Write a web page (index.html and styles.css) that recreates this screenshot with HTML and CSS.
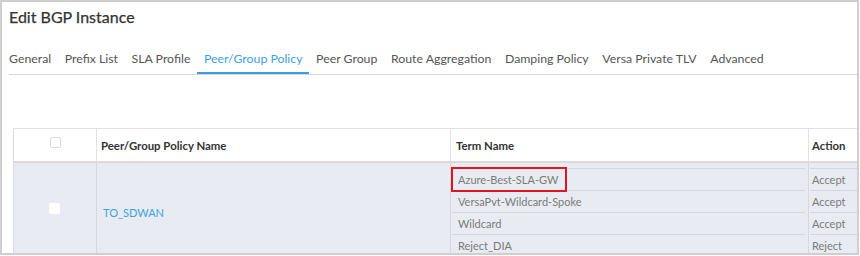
FILE: index.html
```html
<!DOCTYPE html>
<html>
<head>
<meta charset="utf-8">
<link rel="stylesheet" href="styles.css">
</head>
<body>
<div class="frame">
  <h1 class="title">Edit BGP Instance</h1>
  <nav class="tabs">
    <span class="tab">General</span>
    <span class="tab">Prefix List</span>
    <span class="tab">SLA Profile</span>
    <span class="tab active">Peer/Group Policy</span>
    <span class="tab">Peer Group</span>
    <span class="tab">Route Aggregation</span>
    <span class="tab">Damping Policy</span>
    <span class="tab">Versa Private TLV</span>
    <span class="tab">Advanced</span>
  </nav>
  <table class="grid">
    <colgroup>
      <col class="c-check">
      <col class="c-name">
      <col class="c-term">
      <col class="c-action">
    </colgroup>
    <thead>
      <tr>
        <th class="th-check"><span class="cb cb-head"></span></th>
        <th class="th-name">Peer/Group Policy Name</th>
        <th class="th-term">Term Name</th>
        <th class="th-action">Action</th>
      </tr>
    </thead>
    <tbody>
      <tr class="body-row">
        <td class="td-check"><span class="cb cb-body"></span></td>
        <td class="td-name"><a class="link">TO_SDWAN</a></td>
        <td class="td-list">
          <div class="sub term"><span class="hl">Azure-Best-SLA-GW</span></div>
          <div class="sub term">VersaPvt-Wildcard-Spoke</div>
          <div class="sub term">Wildcard</div>
          <div class="sub term">Reject_DIA</div>
        </td>
        <td class="td-list td-action">
          <div class="sub act">Accept</div>
          <div class="sub act">Accept</div>
          <div class="sub act">Accept</div>
          <div class="sub act">Reject</div>
        </td>
      </tr>
    </tbody>
  </table>
</div>
</body>
</html>
```

FILE: styles.css
```css
html, body {
  margin: 0;
  padding: 0;
  background: #ffffff;
}
body {
  font-family: Lato, "Open Sans", "Liberation Sans", sans-serif;
  color: #333;
}
.frame {
  box-sizing: border-box;
  width: 859px;
  height: 255px;
  border: 2px solid #cfcfcf;
  padding: 5px 0 0 7px;
  overflow: hidden;
}
.title {
  margin: 0;
  font-size: 16px;
  line-height: 19px;
  font-weight: 400;
  color: #333;
  -webkit-text-stroke: 0.25px #333;
}
.tabs {
  display: flex;
  margin-top: 25px;
  border-bottom: 1px solid #d6d6d6;
}
.tab {
  font-size: 12.3px;
  line-height: 16px;
  color: #555;
  padding: 0 6.8px 5px 6.8px;
  border-bottom: 2px solid transparent;
  white-space: nowrap;
}
.tab:first-child {
  padding-left: 0;
}
.tab.active {
  color: #3d9fe0;
  border-bottom-color: #3d9fe0;
}
.grid {
  margin: 53px 0 0 4px;
  border-collapse: collapse;
  table-layout: fixed;
  width: 880px;
  font-size: 11px;
}
.c-check { width: 83px; }
.c-name { width: 354px; }
.c-term { width: 358px; }
.c-action { width: 85px; }
.grid th {
  height: 32px;
  text-align: left;
  font-weight: 700;
  font-size: 11.4px;
  color: #333;
  padding: 0 0 0 4px;
  border-top: 1px solid #e2e2e2;
  border-bottom: 2px solid #dadada;
  border-left: 1px solid #e2e2e2;
  background: #fff;
}
.grid th.th-check {
  text-align: center;
  vertical-align: top;
  padding: 8px 0 0 0;
  height: 24px;
  border-left: 1px solid #dcdcdc;
}
.grid th.th-term { padding-left: 5px; }
.grid th.th-action { padding-left: 3px; }
.cb {
  display: block;
  box-sizing: border-box;
  width: 11px;
  height: 11px;
  border-radius: 2px;
  margin: 0 auto;
}
.cb-head {
  border: 1px solid #dcdcdc;
  background: #fff;
}
.cb-body {
  background: #fff;
  position: relative;
  left: -1px;
  top: -4px;
}
.body-row td {
  background: #e8ecf2;
  border-left: 1px solid #d5d9df;
  height: 93px;
  padding: 0;
  vertical-align: middle;
}
.body-row td.td-check {
  border-left: 1px solid #dcdcdc;
}
.body-row td.td-name {
  padding: 1px 0 0 6px;
}
.link {
  color: #3ea1de;
  cursor: pointer;
}
.body-row td.td-list {
  vertical-align: top;
  padding: 5px 3px 0 1px;
}
.body-row td.td-action {
  padding: 5px 0 0 1px;
}
.sub {
  height: 21px;
  line-height: 21px;
  border-top: 1px solid #d3d8df;
  color: #7a7a7a;
  white-space: nowrap;
}
.term {
  padding-left: 6px;
}
.act {
  padding-left: 2px;
}
.hl {
  display: inline-block;
  border: 2px solid #e3141e;
  line-height: 21px;
  padding: 0 7px 0 5px;
  margin-left: -7px;
  margin-top: -2px;
  vertical-align: top;
}
```
